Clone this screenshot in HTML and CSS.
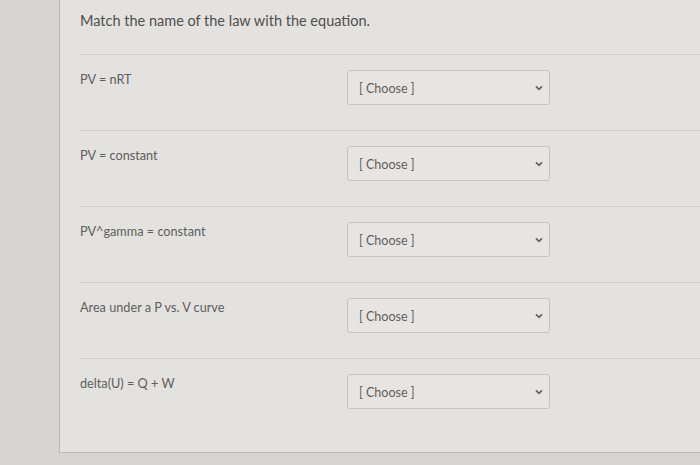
FILE: index.html
```html
<!DOCTYPE html>
<html lang="en">
<head>
<meta charset="utf-8">
<title>Matching question</title>
<link rel="stylesheet" href="styles.css">
</head>
<body>
<div class="page">
  <div class="card">
    <div class="question">Match the name of the law with the equation.</div>
    <div class="answers">
      <div class="row">
        <div class="label">PV = nRT</div>
        <div class="select"><span>[ Choose ]</span><svg class="chev" viewBox="0 0 10 7" width="8" height="6"><path d="M1.2 1.5l3.8 3.6 3.8-3.6" fill="none" stroke="#626262" stroke-width="2.2"/></svg></div>
      </div>
      <div class="row">
        <div class="label">PV = constant</div>
        <div class="select"><span>[ Choose ]</span><svg class="chev" viewBox="0 0 10 7" width="8" height="6"><path d="M1.2 1.5l3.8 3.6 3.8-3.6" fill="none" stroke="#626262" stroke-width="2.2"/></svg></div>
      </div>
      <div class="row">
        <div class="label">PV^gamma = constant</div>
        <div class="select"><span>[ Choose ]</span><svg class="chev" viewBox="0 0 10 7" width="8" height="6"><path d="M1.2 1.5l3.8 3.6 3.8-3.6" fill="none" stroke="#626262" stroke-width="2.2"/></svg></div>
      </div>
      <div class="row">
        <div class="label">Area under a P vs. V curve</div>
        <div class="select"><span>[ Choose ]</span><svg class="chev" viewBox="0 0 10 7" width="8" height="6"><path d="M1.2 1.5l3.8 3.6 3.8-3.6" fill="none" stroke="#626262" stroke-width="2.2"/></svg></div>
      </div>
      <div class="row last">
        <div class="label">delta(U) = Q + W</div>
        <div class="select"><span>[ Choose ]</span><svg class="chev" viewBox="0 0 10 7" width="8" height="6"><path d="M1.2 1.5l3.8 3.6 3.8-3.6" fill="none" stroke="#626262" stroke-width="2.2"/></svg></div>
      </div>
    </div>
  </div>
</div>
</body>
</html>
```
FILE: styles.css
```css
html, body {
  margin: 0;
  padding: 0;
}

body {
  background: #d6d5d1;
  font-family: Lato, "Open Sans", sans-serif;
  color: #5a5a5a;
  width: 700px;
  height: 465px;
  overflow: hidden;
}

.page {
  padding-left: 59px;
}

.card {
  background: #e3e2de;
  border-left: 1px solid #b9b8b4;
  border-bottom: 1px solid #bdbcb8;
  padding-left: 20px;
  margin-right: -20px;
}

.question {
  font-size: 14.5px;
  color: #4f4f4f;
  padding-top: 12px;
  height: 54px;
  box-sizing: border-box;
}

.row {
  border-top: 1px solid #cfceca;
  height: 75px;
  display: grid;
  grid-template-columns: 267px 203px;
  align-items: start;
}

.row.last {
  height: 93px;
}

.label {
  font-size: 12.7px;
  color: #5e5e5e;
  padding-top: 16px;
}

.select {
  margin-top: 15px;
  height: 35px;
  box-sizing: border-box;
  border: 1px solid #c5c4c0;
  border-radius: 3px;
  background: #e6e5e1;
  display: flex;
  align-items: center;
  justify-content: space-between;
  padding: 0 6px 0 11px;
  font-size: 12.5px;
  color: #5f5f5f;
}

.select span {
  padding-top: 2px;
}

.chev {
  display: block;
}
```
